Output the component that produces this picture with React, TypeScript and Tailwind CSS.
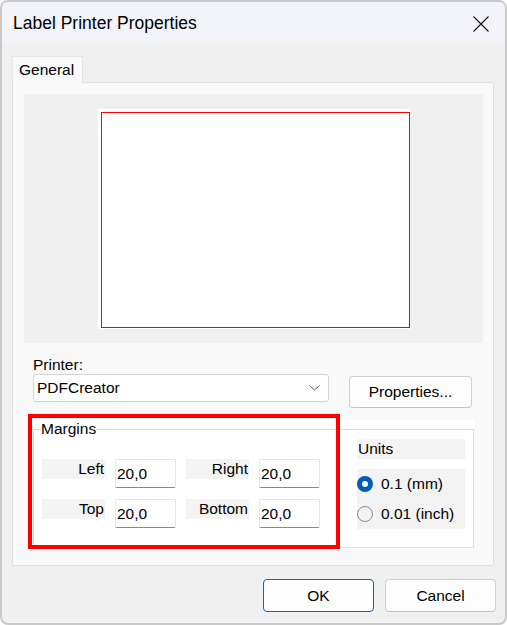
import React from "react";

// Label Printer Properties dialog (Windows 11 look)

const font = "font-['Liberation_Sans',Arial,sans-serif]";

function MarginField({ label, value }: { label: string; value: string }) {
  return (
    <>
      <div className="w-[63px] h-[20px] bg-[#f3f3f3] text-right leading-[20px] pr-[1px]">{label}</div>
      <div className="w-[61px] h-[29px] bg-white border border-[#e5e5e5] border-b-[#868686] rounded-[2px] flex items-center pl-[1px]">
        {value}
      </div>
    </>
  );
}

function Radio({ checked, label }: { checked: boolean; label: string }) {
  return (
    <div className="h-[30px] flex items-center gap-[8px]">
      {checked ? (
        <span className="w-[16px] h-[16px] rounded-full bg-[#005fb8] flex items-center justify-center">
          <span className="w-[6px] h-[6px] rounded-full bg-white" />
        </span>
      ) : (
        <span className="w-[16px] h-[16px] rounded-full bg-[#f3f3f3] border border-[#8a8a8a]" />
      )}
      <span className="leading-[20px]">{label}</span>
    </div>
  );
}

export default function App() {
  return (
    <div
      className={`${font} w-[507px] h-[625px] rounded-[8px] border-2 border-[#c9c9c9] bg-[#f0f0f0] overflow-hidden flex flex-col text-[15.5px] text-black`}
    >
      {/* title bar */}
      <div className="h-[42px] bg-[#f3f4f9] flex items-center justify-between pl-[11px] pr-[16px] shrink-0">
        <span className="text-[17.5px] text-black">Label Printer Properties</span>
        <svg width="16" height="16" viewBox="0 0 16 16" className="mt-[2px]">
          <path d="M0.5 0.5 L15.5 15.5 M15.5 0.5 L0.5 15.5" stroke="#1b1b1b" strokeWidth="1.2" fill="none" />
        </svg>
      </div>

      <div className="pl-[10px] pr-[11px] pt-[12px]">
        {/* tab */}
        <div className="relative z-10 -mb-px w-[71px] h-[27px] bg-[#f9f9f9] border border-b-0 border-[#e5e5e5] pl-[6px] pt-[3px] leading-[20px]">
          General
        </div>

        {/* tab panel */}
        <div className="w-[482px] h-[484px] bg-[#f9f9f9] border border-[#e0e0e0] flex flex-col">
          {/* preview */}
          <div className="mt-[11px] ml-[11px] w-[459px] h-[249px] bg-[#f0f0f0] flex items-center justify-center">
            <div className="w-[312px] h-[220px] bg-white pl-[3px] pt-[3px] pb-[1px]">
              <div className="w-full h-full border border-[#ff0000]" />
            </div>
          </div>

          {/* printer row */}
          <div className="flex items-start ml-[20px]">
            <div className="flex flex-col">
              <div className="mt-[12px] h-[19px] leading-[19px]">Printer:</div>
              <div className="w-[296px] h-[28px] bg-white border border-[#d4d4d4] rounded-[3px] flex items-center justify-between pl-[3px] pr-[8px]">
                <span>PDFCreator</span>
                <svg width="11" height="6" viewBox="0 0 11 6">
                  <path d="M0.5 0.5 L5.5 5 L10.5 0.5" stroke="#5a5a5a" strokeWidth="1" fill="none" />
                </svg>
              </div>
            </div>
            <div className="ml-[20px] mt-[33px] w-[123px] h-[32px] bg-[#fdfdfd] border border-[#d0d0d0] border-b-[#c0c0c0] rounded-[4px] flex items-center justify-center">
              Properties...
            </div>
          </div>

          {/* groups row */}
          <div className="flex items-start ml-[15px] mt-[6px]">
            {/* margins (highlighted) */}
            <div className="w-[312px] h-[135px] border-4 border-[#ff0000] bg-white flex">
              <fieldset className="mt-[1px] ml-[1px] flex-1 border-t border-l border-[#dcdcdc] pl-[7px]">
                <legend className="leading-[20px]">Margins</legend>
                <div className="ml-[1px] mt-[20px] flex flex-col gap-[11px]">
                  <div className="flex items-start gap-[10px]">
                    <MarginField label="Left" value="20,0" />
                    <MarginField label="Right" value="20,0" />
                  </div>
                  <div className="flex items-start gap-[10px]">
                    <MarginField label="Top" value="20,0" />
                    <MarginField label="Bottom" value="20,0" />
                  </div>
                </div>
              </fieldset>
            </div>

            {/* units */}
            <div className="mt-[6px] w-[134px] h-[129px] bg-white">
              <div className="mt-[9px] h-[119px] border-t border-r border-b border-[#dcdcdc] pl-[17px]">
                <div className="mt-[9px] w-[108px] h-[20px] bg-[#f3f3f3] leading-[20px] pl-[1px]">Units</div>
                <div className="mt-[10px] w-[108px] h-[60px] bg-[#f3f3f3] flex flex-col">
                  <Radio checked label="0.1 (mm)" />
                  <Radio checked={false} label="0.01 (inch)" />
                </div>
              </div>
            </div>
          </div>
        </div>
      </div>

      {/* buttons */}
      <div className="flex justify-end gap-[11px] pr-[9px] mt-[13px]">
        <div className="w-[111px] h-[33px] bg-[#fdfdfd] border border-[#0067c0] rounded-[4px] flex items-center justify-center">
          OK
        </div>
        <div className="w-[111px] h-[33px] bg-[#fdfdfd] border border-[#d0d0d0] border-b-[#c0c0c0] rounded-[4px] flex items-center justify-center">
          Cancel
        </div>
      </div>
    </div>
  );
}
